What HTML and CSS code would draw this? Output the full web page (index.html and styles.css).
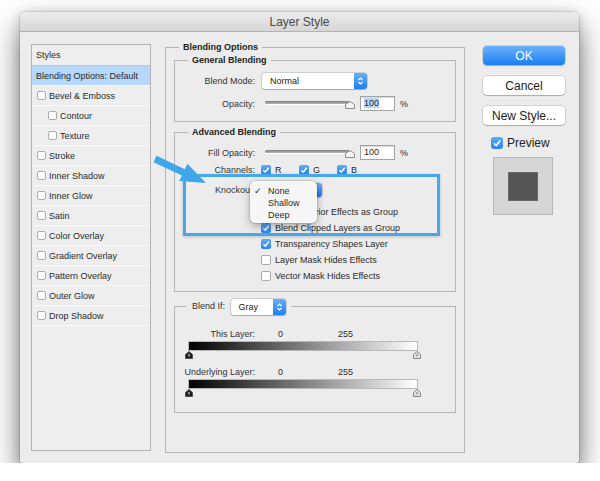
FILE: index.html
```html
<!DOCTYPE html>
<html lang="en">
<head>
  <meta charset="UTF-8">
  <title>Layer Style</title>
  <link rel="stylesheet" href="styles.css">
</head>
<body>
  <div class="window">
    <div class="titlebar">Layer Style</div>

    <div class="content">
      <ul class="styles-list">
        <li class="head">Styles</li>
        <li class="active">Blending Options: Default</li>
        <li><span class="cb"></span>Bevel &amp; Emboss</li>
        <li class="sub"><span class="cb"></span>Contour</li>
        <li class="sub"><span class="cb"></span>Texture</li>
        <li><span class="cb"></span>Stroke</li>
        <li><span class="cb"></span>Inner Shadow</li>
        <li><span class="cb"></span>Inner Glow</li>
        <li><span class="cb"></span>Satin</li>
        <li><span class="cb"></span>Color Overlay</li>
        <li><span class="cb"></span>Gradient Overlay</li>
        <li><span class="cb"></span>Pattern Overlay</li>
        <li><span class="cb"></span>Outer Glow</li>
        <li><span class="cb"></span>Drop Shadow</li>
      </ul>

      <fieldset class="group outer">
        <legend>Blending Options</legend>

        <fieldset class="group general">
          <legend>General Blending</legend>
          <div class="row h16">
            <span class="lbl">Blend Mode:</span>
            <div class="select wide">Normal<span class="stepper"><svg width="7" height="10" viewBox="0 0 7 10"><path d="M1.5 4 L3.5 2 L5.5 4 M1.5 6 L3.5 8 L5.5 6" fill="none" stroke="#fff" stroke-width="1.2"/></svg></span></div>
          </div>
          <div class="row h15 gap7">
            <span class="lbl">Opacity:</span>
            <div class="slider"><span class="track"></span><svg class="thumb" width="10" height="8" viewBox="0 0 10 8"><path d="M5 0.5 L9.5 3.5 V7.5 H0.5 V3.5 Z" fill="#f5f5f5" stroke="#8c8c8c"/></svg></div>
            <span class="num"><span class="hl">100</span></span>
            <span class="pct">%</span>
          </div>
        </fieldset>

        <fieldset class="group advanced">
          <legend>Advanced Blending</legend>
          <div class="row h15">
            <span class="lbl">Fill Opacity:</span>
            <div class="slider"><span class="track"></span><svg class="thumb" width="10" height="8" viewBox="0 0 10 8"><path d="M5 0.5 L9.5 3.5 V7.5 H0.5 V3.5 Z" fill="#f5f5f5" stroke="#8c8c8c"/></svg></div>
            <span class="num">100</span>
            <span class="pct">%</span>
          </div>
          <div class="row h14 gap3">
            <span class="lbl">Channels:</span>
            <span class="chan"><span class="cb on"><svg width="10" height="10" viewBox="0 0 10 10"><path d="M2.4 5.2 L4.3 7.1 L7.7 2.8" fill="none" stroke="#fff" stroke-width="1.4"/></svg></span>R</span>
            <span class="chan"><span class="cb on"><svg width="10" height="10" viewBox="0 0 10 10"><path d="M2.4 5.2 L4.3 7.1 L7.7 2.8" fill="none" stroke="#fff" stroke-width="1.4"/></svg></span>G</span>
            <span class="chan"><span class="cb on"><svg width="10" height="10" viewBox="0 0 10 10"><path d="M2.4 5.2 L4.3 7.1 L7.7 2.8" fill="none" stroke="#fff" stroke-width="1.4"/></svg></span>B</span>
          </div>
          <div class="row h14 gap6">
            <span class="lbl">Knockout:</span>
            <div class="ko">
              <div class="select short">None<span class="stepper"></span></div>
              <ul class="popup">
                <li><span class="mark">&#10003;</span>None</li>
                <li><span class="mark"></span>Shallow</li>
                <li><span class="mark"></span>Deep</li>
              </ul>
            </div>
          </div>
          <ul class="checks">
            <li><span class="cb on"><svg width="10" height="10" viewBox="0 0 10 10"><path d="M2.4 5.2 L4.3 7.1 L7.7 2.8" fill="none" stroke="#fff" stroke-width="1.4"/></svg></span>Blend Interior Effects as Group</li>
            <li><span class="cb on"><svg width="10" height="10" viewBox="0 0 10 10"><path d="M2.4 5.2 L4.3 7.1 L7.7 2.8" fill="none" stroke="#fff" stroke-width="1.4"/></svg></span>Blend Clipped Layers as Group</li>
            <li><span class="cb on"><svg width="10" height="10" viewBox="0 0 10 10"><path d="M2.4 5.2 L4.3 7.1 L7.7 2.8" fill="none" stroke="#fff" stroke-width="1.4"/></svg></span>Transparency Shapes Layer</li>
            <li><span class="cb"></span>Layer Mask Hides Effects</li>
            <li><span class="cb"></span>Vector Mask Hides Effects</li>
          </ul>
        </fieldset>

        <fieldset class="group blendif">
          <legend>Blend If: <span class="select gray">Gray<span class="stepper"><svg width="7" height="10" viewBox="0 0 7 10"><path d="M1.5 4 L3.5 2 L5.5 4 M1.5 6 L3.5 8 L5.5 6" fill="none" stroke="#fff" stroke-width="1.2"/></svg></span></span></legend>
          <div class="range-row">
            <span class="lbl">This Layer:</span>
            <span class="lo">0</span><span>255</span>
          </div>
          <div class="bar"></div>
          <div class="handles">
            <svg width="8" height="8" viewBox="0 0 8 8"><path d="M4 0.5 L7.5 3.5 V7.5 H0.5 V3.5 Z" fill="#1a1a1a" stroke="#555"/><path d="M4 3 V5.5" stroke="#fff" stroke-width="1"/></svg>
            <svg width="8" height="8" viewBox="0 0 8 8"><path d="M4 0.5 L7.5 3.5 V7.5 H0.5 V3.5 Z" fill="#e0e0e0" stroke="#888"/><path d="M4 3 V5.5" stroke="#777" stroke-width="1"/></svg>
          </div>
          <div class="range-row gap7">
            <span class="lbl">Underlying Layer:</span>
            <span class="lo">0</span><span>255</span>
          </div>
          <div class="bar"></div>
          <div class="handles">
            <svg width="8" height="8" viewBox="0 0 8 8"><path d="M4 0.5 L7.5 3.5 V7.5 H0.5 V3.5 Z" fill="#1a1a1a" stroke="#555"/><path d="M4 3 V5.5" stroke="#fff" stroke-width="1"/></svg>
            <svg width="8" height="8" viewBox="0 0 8 8"><path d="M4 0.5 L7.5 3.5 V7.5 H0.5 V3.5 Z" fill="#e0e0e0" stroke="#888"/><path d="M4 3 V5.5" stroke="#777" stroke-width="1"/></svg>
          </div>
        </fieldset>
      </fieldset>

      <div class="actions">
        <button class="btn primary">OK</button>
        <button class="btn">Cancel</button>
        <button class="btn">New Style...</button>
        <label class="preview"><span class="cb on big"><svg width="12" height="12" viewBox="0 0 12 12"><path d="M3 6.3 L5.2 8.5 L9.2 3.4" fill="none" stroke="#fff" stroke-width="1.6"/></svg></span>Preview</label>
        <div class="thumb-box"><div class="swatch"></div></div>
      </div>
    </div>

    <!-- annotation on top of the screenshot -->
    <div class="callout"></div>
    <svg class="arrow" width="60" height="36" viewBox="0 0 60 36">
      <polygon points="6.5,3.8 34.8,17.2 37.4,11.8 56,31 29.3,29 31.9,23.6 3.5,10.2" fill="#3fa6ea"/>
    </svg>
  </div>
</body>
</html>
```

FILE: styles.css
```css
body {
  margin: 0;
  background: #fff;
  font-family: "Liberation Sans", Arial, sans-serif;
  color: #2a2a2a;
}

.window {
  position: relative;
  width: 559px;
  height: 451px;
  margin: 12px 0 0 20px;
  background: #ececec;
  border-radius: 5px 5px 3px 3px;
  box-shadow: 0 0 0 1px rgba(0,0,0,0.1), 0 14px 30px rgba(0,0,0,0.55), 0 2px 12px rgba(0,0,0,0.15);
}

.titlebar {
  height: 19px;
  line-height: 20px;
  text-align: center;
  font-size: 12px;
  color: #4a4a4a;
  background: linear-gradient(#ececec, #d6d6d6);
  border-bottom: 1px solid #b3b3b3;
  border-radius: 5px 5px 0 0;
}

.content {
  display: flex;
  align-items: flex-start;
  padding: 9px 14px 10px 11px;
}

/* left list */
.styles-list {
  list-style: none;
  margin: 3px 0 0;
  padding: 0;
  width: 120px;
  height: 407px;
  box-sizing: border-box;
  border: 1px solid #b3b3b3;
  background: #eeeeee;
  font-size: 9px;
}

.styles-list li {
  display: flex;
  align-items: center;
  height: 19px;
  padding-left: 5px;
  border-bottom: 1px solid #fafafa;
}

.styles-list li.head {
  height: 20px;
  padding-left: 4px;
  border-bottom: 1px solid #c6c6c6;
}

.styles-list li.active {
  background: #b5d8fc;
  padding-left: 4px;
}

.styles-list li.sub {
  padding-left: 16px;
}

.cb {
  display: inline-flex;
  width: 9px;
  height: 9px;
  margin-right: 3px;
  box-sizing: border-box;
  border: 1px solid #acacac;
  border-radius: 2px;
  background: #fff;
  flex: none;
}

.cb.on {
  width: 10px;
  height: 10px;
  border: none;
  background: linear-gradient(#5eaaf8, #2b83f0);
}

.cb.on.big {
  width: 12px;
  height: 12px;
  border-radius: 3px;
}

/* main panel */
.group {
  margin: 0;
  padding: 0;
  border: 1px solid #b5b5b5;
  min-width: 0;
}

.group legend {
  font-size: 9px;
  font-weight: bold;
  line-height: 13px;
  padding: 0 4px;
  margin-left: 13px;
  color: #222;
}

.outer {
  margin-left: 14px;
  width: 300px;
  height: 412px;
  box-sizing: border-box;
  padding: 0 8px;
}

.outer > legend {
  margin-left: 5px;
}

.general {
  padding: 6px 0 10px;
}

.advanced {
  margin-top: 4px;
  padding: 6px 0 7px;
}

.row {
  display: flex;
  align-items: center;
  font-size: 9px;
}

.h16 { height: 16px; }
.h15 { height: 15px; }
.h14 { height: 14px; }
.gap3 { margin-top: 3px; }
.gap6 { margin-top: 6px; }
.gap7 { margin-top: 7px; }

.lbl {
  width: 80px;
  margin-right: 6px;
  text-align: right;
  color: #333;
  flex: none;
}

.select {
  position: relative;
  display: inline-flex;
  align-items: center;
  height: 16px;
  box-sizing: border-box;
  padding-left: 8px;
  background: #fff;
  border-radius: 3px;
  box-shadow: 0 0 0 0.5px rgba(0,0,0,0.25), 0 1px 1px rgba(0,0,0,0.18);
  font-size: 9px;
  font-weight: normal;
  color: #222;
}

.select.wide {
  width: 105px;
  margin-left: 1px;
}

.select.short {
  width: 60px;
  height: 14px;
  margin-left: 1px;
}

.select.gray {
  width: 55px;
  margin-left: 3px;
  vertical-align: middle;
}

.stepper {
  position: absolute;
  right: 0;
  top: 0;
  bottom: 0;
  width: 13px;
  display: flex;
  align-items: center;
  justify-content: center;
  border-radius: 0 3px 3px 0;
  background: linear-gradient(#66b0fa, #1f7ef1);
}

.slider {
  display: flex;
  align-items: center;
  margin-left: 4px;
}

.track {
  width: 85px;
  height: 3px;
  margin-top: -3px;
  border-radius: 2px;
  background: linear-gradient(#7d7d7d, #b8b8b8);
  box-shadow: 0 1px 0 #fff;
}

.thumb {
  margin-left: -5px;
  margin-top: 2px;
}

.num {
  width: 35px;
  height: 15px;
  margin-left: 5px;
  box-sizing: border-box;
  padding-left: 3px;
  line-height: 13px;
  border: 1px solid #a3a3a3;
  box-shadow: inset 0 1px 1px rgba(0,0,0,0.15);
  background: #fff;
}

.hl {
  background: #b3d6fd;
}

.pct {
  margin-left: 5px;
}

.chan {
  display: inline-flex;
  align-items: center;
  width: 38px;
}

.chan .cb {
  margin-right: 4px;
}

.ko {
  position: relative;
  display: flex;
}

.popup {
  position: absolute;
  left: -11px;
  top: -2px;
  width: 67px;
  height: 42px;
  box-sizing: border-box;
  margin: 0;
  padding: 4px 0 0;
  list-style: none;
  background: #f6f6f6;
  border-radius: 5px;
  box-shadow: 0 0 0 0.5px rgba(0,0,0,0.2), 0 3px 8px rgba(0,0,0,0.3);
  font-size: 9px;
  z-index: 2;
}

.popup li {
  height: 12px;
  line-height: 12px;
  padding-left: 4px;
}

.mark {
  display: inline-block;
  width: 14px;
}

.checks {
  list-style: none;
  margin: 7px 0 0;
  padding: 0;
  font-size: 9px;
}

.checks li {
  display: flex;
  align-items: center;
  height: 16px;
  padding-left: 86px;
}

.checks .cb {
  width: 10px;
  height: 10px;
  margin-right: 4px;
}

/* blend if */
.blendif {
  margin-top: 6px;
  padding: 13px 0 15px;
}

.blendif legend {
  margin-left: 11px;
  padding: 0 5px 0 6px;
  font-weight: normal;
  line-height: 16px;
  color: #333;
}

.range-row {
  display: flex;
  height: 12px;
  line-height: 12px;
  font-size: 9px;
}

.range-row .lbl {
  margin-right: 23px;
}

.range-row .lo {
  width: 60px;
}

.bar {
  width: 230px;
  height: 10px;
  margin: 1px 0 0 13px;
  box-sizing: border-box;
  border: 1px solid #b8b8b8;
  background: linear-gradient(to right, #000, #fff);
}

.handles {
  display: flex;
  justify-content: space-between;
  width: 236px;
  height: 8px;
  margin-left: 10px;
}

/* right column */
.actions {
  display: flex;
  flex-direction: column;
  width: 82px;
  margin: 5px 0 0 18px;
}

.btn {
  height: 19px;
  padding: 0;
  border: none;
  border-radius: 4px;
  background: #fff;
  box-shadow: 0 0 0 0.5px rgba(0,0,0,0.22), 0 1px 1px rgba(0,0,0,0.18);
  font-family: inherit;
  font-size: 12px;
  color: #222;
  margin-top: 11px;
}

.btn.primary {
  margin-top: 0;
  color: #fff;
  background: linear-gradient(#6bb2fa, #1b7ef3);
}

.preview {
  display: flex;
  align-items: center;
  margin: 11px 0 0 8px;
  font-size: 12px;
  color: #222;
}

.preview .cb {
  margin-right: 4px;
}

.thumb-box {
  display: flex;
  align-items: center;
  justify-content: center;
  width: 60px;
  height: 58px;
  margin: 7px 0 0 10px;
  box-sizing: border-box;
  border: 1px solid #b8b8b8;
  background: #d6d6d6;
}

.swatch {
  width: 28px;
  height: 27px;
  background: #555;
  box-shadow: 0 0 0 1px #6a6a6a;
}

/* annotation */
.callout {
  position: absolute;
  left: 163px;
  top: 162px;
  width: 257px;
  height: 62px;
  box-sizing: border-box;
  border: 3px solid #46a8ec;
  box-shadow: 0 1px 3px rgba(0,0,0,0.2);
  z-index: 3;
}

.arrow {
  position: absolute;
  left: 130px;
  top: 140px;
  z-index: 4;
}
```
